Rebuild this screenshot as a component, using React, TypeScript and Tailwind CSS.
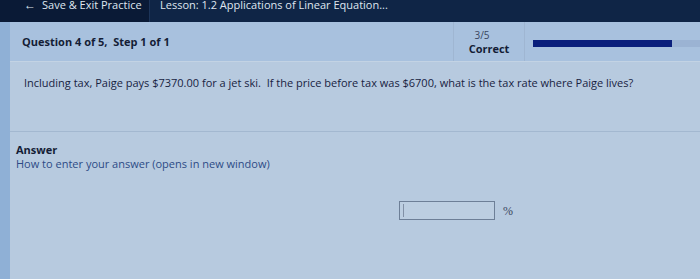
import React from "react";

export default function App() {
  return (
    <div className="w-[700px] h-[279px] overflow-hidden bg-[#b7cadf] font-['Open_Sans',sans-serif] flex flex-col text-[#1b2744]">
      {/* top bar */}
      <div className="h-[22px] flex bg-[#0f2546] text-[#dfe6f0] text-[11px] leading-none overflow-hidden">
        <div className="w-[150px] bg-[#0a1a36] flex items-start pl-[24px] gap-[6px] -mt-[1px] border-r border-[#1c3459]">
          <span className="text-[12px]">←</span>
          <span>Save &amp; Exit Practice</span>
        </div>
        <div className="pl-[10px] -mt-[1px]">Lesson: 1.2 Applications of Linear Equation...</div>
      </div>
      <div className="flex-1 flex">
        <div className="w-[10px] bg-[#8fb0d6]" />
        <div className="flex-1 flex flex-col">
          {/* header */}
          <div className="h-[40px] bg-[#a8c1de] flex items-stretch border-b border-[#c3d3e4]">
            <div className="flex-1 flex items-center pl-[12px] pt-[1px] text-[11px] font-bold text-[#141d36]">
              Question 4 of 5,&nbsp; Step 1 of 1
            </div>
            <div className="w-[72px] border-l border-r border-[#9fb6d2] flex flex-col items-center justify-center leading-[13px]">
              <span className="text-[10px] text-[#3a4660] -ml-[14px]">3/5</span>
              <span className="text-[11px] font-bold text-[#141d36]">Correct</span>
            </div>
            <div className="w-[175px] flex items-center pl-[8px]">
              <div className="flex-1 h-[7px] bg-[#9bb3d3] flex mt-[4px]">
                <div className="w-[139px] h-full bg-[#0a1f7c]" />
              </div>
            </div>
          </div>
          {/* question */}
          <div className="h-[70px] pl-[14px] pt-[13px] text-[11px] text-[#18233f] border-b border-[#a3b8d0]">
            Including tax, Paige pays $7370.00 for a jet ski.&nbsp; If the price before tax was $6700, what is the tax rate where Paige lives?
          </div>
          {/* answer */}
          <div className="flex-1 pl-[6px] pt-[11px] flex flex-col">
            <div className="text-[11px] font-bold leading-[14px] text-[#141d36]">Answer</div>
            <div className="text-[11px] leading-[14px] text-[#2d4a86]">How to enter your answer (opens in new window)</div>
            <div className="flex items-center mt-[30px] ml-[383px] gap-[8px]">
              <div className="w-[96px] h-[19px] border border-[#6d7f97] bg-[#bccee1] flex items-center pl-[3px]">
                <div className="w-[1px] h-[13px] bg-[#8190a6]" />
              </div>
              <span className="font-['Liberation_Serif',serif] text-[12px] text-[#3a465c]">%</span>
            </div>
          </div>
        </div>
      </div>
    </div>
  );
}
